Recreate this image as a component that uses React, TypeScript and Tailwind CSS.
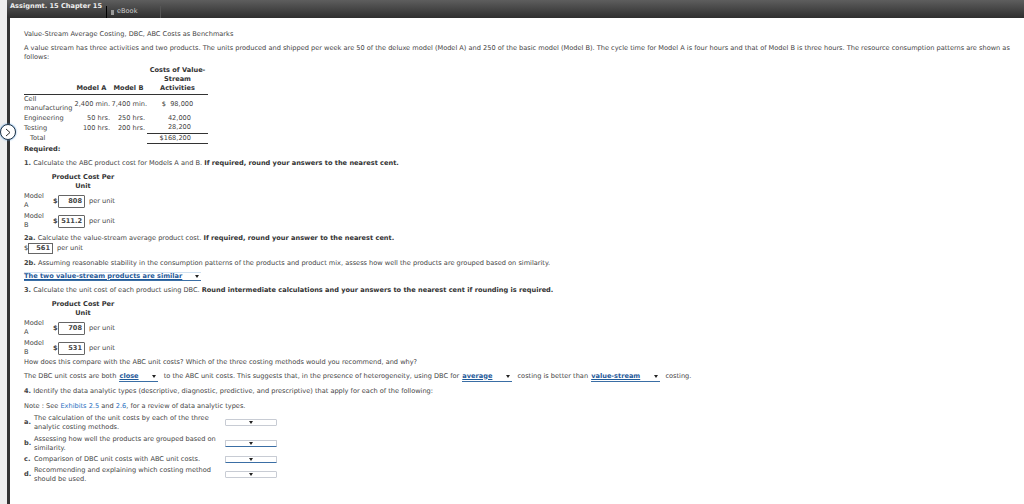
const sel = 'border-b border-[#3a6ea5] text-[#1f5a9a] font-bold underline';

function Caret() {
  return <span className="ml-auto mr-[2px] w-0 h-0 border-x-[2px] border-x-transparent border-t-[3px] border-t-[#222]" />;
}

function CostTable({ a, b }: { a: string; b: string }) {
  return (
    <div className="mt-[5px]">
      <div className="w-[66px] ml-[26px] text-center font-bold text-[#333] leading-[9px]">Product Cost Per Unit</div>
      {[['A', a], ['B', b]].map(([m, v]) => (
        <div key={m} className="flex items-center h-[19px] mt-[1px]">
          <div className="w-[29px] leading-[9px]">Model<br />{m}</div>
          <span className="font-bold w-[5px]">$</span>
          <span className="border border-[#666] rounded-[1px] h-[13px] w-[27px] text-right pr-[2px] font-bold leading-[11px]">{v}</span>
          <span className="ml-[4px]">per unit</span>
        </div>
      ))}
    </div>
  );
}

function Pick({ label, text, line, top }: { label: string; text: string; line?: boolean; top: string }) {
  return (
    <div className={`flex items-center min-h-[9px] ${top}`}>
      <span className="w-[10px] font-bold">{label}</span>
      <span className="w-[191px] leading-[9px]">{text}</span>
      <span className={`flex justify-center items-center w-[52px] h-[7px] border border-[#c8ccd4] rounded-[1px] ${line ? 'border-b-[#3a6ea5]' : ''}`}>
        <span className="w-0 h-0 border-x-[2px] border-x-transparent border-t-[3px] border-t-[#222]" />
      </span>
    </div>
  );
}

export default function App() {
  return (
    <div className="relative flex w-[1024px] h-[504px] overflow-hidden bg-white text-[6.6px] text-[#444] font-['DejaVu_Sans','Liberation_Sans',sans-serif]">
      <div className="w-[7px] bg-[#eeeeee]" />
      <div className="flex-1 flex flex-col">
        <div className="flex h-[18px] bg-gradient-to-b from-[#5e5e5e] to-[#2f2f2f]">
          <div className="w-[99px] pl-[3px] pt-[2px] font-bold text-[#eee]">Assignmt. 15 Chapter 15</div>
          <div className="flex items-center mt-[6px] h-[12px] w-[55px] border-l border-black pl-[4px] gap-[3px] text-[#ccc] border-r-[#555] border-r">
            <span className="w-[3px] h-[5px] bg-[#999]" />eBook
          </div>
        </div>
        <div className="flex flex-1">
          <div className="w-[3px] bg-[#333]" />
          <div className="flex-1 pl-[14px] pt-[12px] pr-[6px] leading-[9px]">
            <p>Value-Stream Average Costing, DBC, ABC Costs as Benchmarks</p>
            <p className="mt-[5px]">A value stream has three activities and two products. The units produced and shipped per week are 50 of the deluxe model (Model A) and 250 of the basic model (Model B). The cycle time for Model A is four hours and that of Model B is three hours. The resource consumption patterns are shown as<br />follows:</p>

            <table className="mt-[4px] border-collapse">
              <thead>
                <tr className="border-b border-[#333] font-bold text-[#333]">
                  <th className="w-[49px]" />
                  <th className="w-[37px] align-bottom text-center pb-[1px]">Model A</th>
                  <th className="w-[37px] align-bottom text-center pb-[1px]">Model B</th>
                  <th className="w-[61px] text-center pb-[1px]">Costs of Value-Stream Activities</th>
                </tr>
              </thead>
              <tbody>
                <tr className="h-[18px]"><td>Cell manufacturing</td><td className="text-right whitespace-nowrap">2,400 min.</td><td className="text-right whitespace-nowrap">7,400 min.</td><td className="text-center">$&nbsp;&nbsp;98,000</td></tr>
                <tr className="h-[10px]"><td>Engineering</td><td className="text-right">50 hrs.</td><td className="text-right pr-[2px]">250 hrs.</td><td className="text-right pr-[17px]">42,000</td></tr>
                <tr className="h-[10px]"><td>Testing</td><td className="text-right">100 hrs.</td><td className="text-right pr-[2px]">200 hrs.</td><td className="text-right pr-[17px] border-b border-[#333]">28,200</td></tr>
                <tr className="h-[10px]"><td className="pl-[6px]">Total</td><td /><td /><td className="text-right pr-[17px] border-b border-[#333]">$168,200</td></tr>
              </tbody>
            </table>

            <p className="mt-[1px] font-bold text-[#333]">Required:</p>
            <p className="mt-[5px]"><b>1.</b> Calculate the ABC product cost for Models A and B. <b className="text-[#333]">If required, round your answers to the nearest cent.</b></p>
            <CostTable a="808" b="511.2" />
            <p className="mt-[3px]"><b>2a.</b> Calculate the value-stream average product cost. <b className="text-[#333]">If required, round your answer to the nearest cent.</b></p>
            <div className="flex items-center mt-[-1px] h-[13px]">
              <span className="w-[4px]">$</span>
              <span className="border border-[#666] h-[11px] w-[25px] text-right pr-[2px] font-bold leading-[9px]">561</span>
              <span className="ml-[4px]">per unit</span>
            </div>
            <p className="mt-[4px]"><b>2b.</b> Assuming reasonable stability in the consumption patterns of the products and product mix, assess how well the products are grouped based on similarity.</p>
            <div className={`${sel} flex items-center w-[177px] h-[9px] mt-[4px] border-t border-t-[#cfe0f0]`}>The two value-stream products are similar<Caret /></div>
            <p className="mt-[5px]"><b>3.</b> Calculate the unit cost of each product using DBC. <b className="text-[#333]">Round intermediate calculations and your answers to the nearest cent if rounding is required.</b></p>
            <CostTable a="708" b="531" />
            <p className="mt-[0px]">How does this compare with the ABC unit costs? Which of the three costing methods would you recommend, and why?</p>
            <p className="mt-[5px] flex items-center whitespace-pre">The DBC unit costs are both <span className={`${sel} flex items-center w-[39px] mx-[1px]`}>close<Caret /></span>  to the ABC unit costs. This suggests that, in the presence of heterogeneity, using DBC for <span className={`${sel} flex items-center w-[50px] mx-[1px]`}>average<Caret /></span>  costing is better than <span className={`${sel} flex items-center w-[69px] mx-[1px]`}>value-stream<Caret /></span>  costing.</p>
            <p className="mt-[5px]"><b>4.</b> Identify the data analytic types (descriptive, diagnostic, predictive, and prescriptive) that apply for each of the following:</p>
            <p className="mt-[6px]">Note : See <span className="text-[#2a6fc0]">Exhibits 2.5</span> and <span className="text-[#2a6fc0]">2.6</span>, for a review of data analytic types.</p>
            <div className="mt-[3px]">
              <Pick top="mt-[2px]" label="a." text="The calculation of the unit costs by each of the three analytic costing methods." />
              <Pick top="mt-[3px]" label="b." text="Assessing how well the products are grouped based on similarity." line />
              <Pick top="mt-[2px]" label="c." text="Comparison of DBC unit costs with ABC unit costs." line />
              <Pick top="mt-[2px]" label="d." text="Recommending and explaining which costing method should be used." />
            </div>
          </div>
        </div>
      </div>
      <button className="absolute left-0 top-[124px] w-[16px] h-[16px] rounded-full bg-white border border-[#234] shadow-[0_0_2px_#5aa0e0] flex items-center justify-center">
        <svg width="8" height="9" viewBox="0 0 8 9" fill="none" stroke="#333" strokeWidth="1"><path d="M2 1l4 3.5L2 8" /></svg>
      </button>
    </div>
  );
}
